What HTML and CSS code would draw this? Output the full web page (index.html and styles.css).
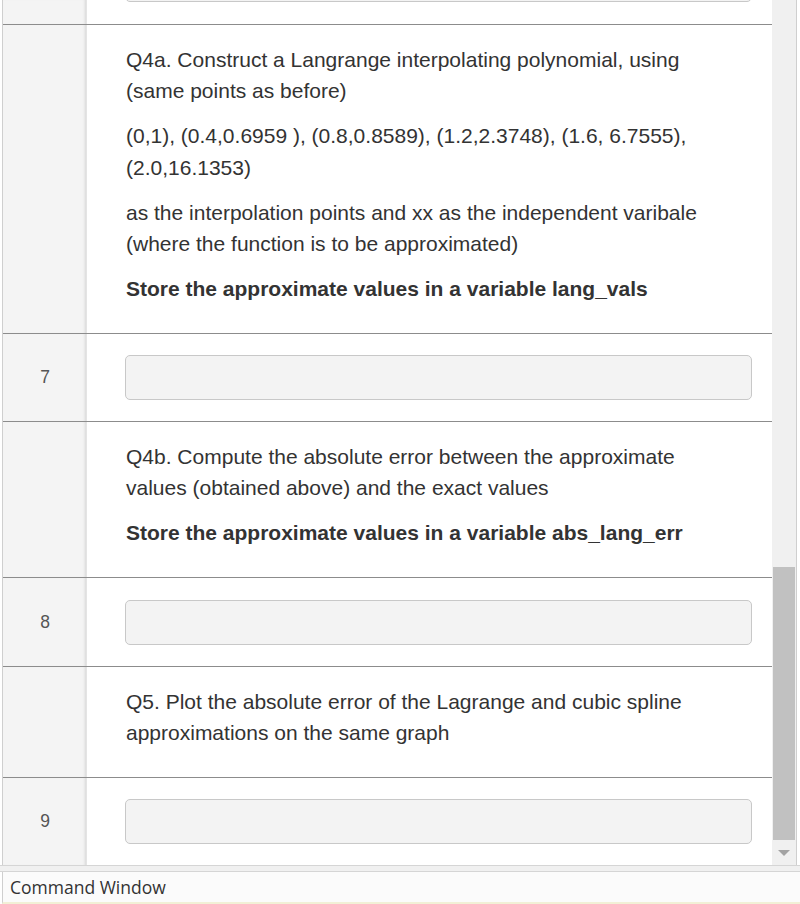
FILE: index.html
```html
<!DOCTYPE html>
<html>
<head>
<meta charset="utf-8">
<link rel="stylesheet" href="styles.css">
</head>
<body>
<div class="app">
  <div class="editor">
    <div class="doc">
      <div class="row row-cut">
        <div class="gutter"></div>
        <div class="cell code-cell"><div class="codebox codebox-cut"></div></div>
      </div>
      <div class="row">
        <div class="gutter"></div>
        <div class="cell text-cell">
          <p>Q4a. Construct a Langrange interpolating polynomial, using (same points as before)</p>
          <p>(0,1), (0.4,0.6959 ), (0.8,0.8589), (1.2,2.3748), (1.6, 6.7555), (2.0,16.1353)</p>
          <p>as the interpolation points and xx as the independent varibale (where the function is to be approximated)</p>
          <p class="bold">Store the approximate values in a variable lang_vals</p>
        </div>
      </div>
      <div class="row">
        <div class="gutter num">7</div>
        <div class="cell code-cell"><div class="codebox"></div></div>
      </div>
      <div class="row">
        <div class="gutter"></div>
        <div class="cell text-cell">
          <p>Q4b. Compute the absolute error between the approximate values (obtained above) and the exact values</p>
          <p class="bold">Store the approximate values in a variable abs_lang_err</p>
        </div>
      </div>
      <div class="row">
        <div class="gutter num">8</div>
        <div class="cell code-cell code-cell-tall"><div class="codebox"></div></div>
      </div>
      <div class="row">
        <div class="gutter"></div>
        <div class="cell text-cell">
          <p>Q5. Plot the absolute error of the Lagrange and cubic spline approximations on the same graph</p>
        </div>
      </div>
      <div class="row row-last">
        <div class="gutter num">9</div>
        <div class="cell code-cell"><div class="codebox"></div></div>
      </div>
    </div>
    <div class="scrollbar">
      <div class="track"><div class="thumb"></div></div>
      <div class="arrow"></div>
    </div>
  </div>
  <div class="sep"></div>
  <div class="cmd">Command Window</div>
</div>
</body>
</html>
```
FILE: styles.css
```css
* { box-sizing: border-box; }
html, body { margin: 0; padding: 0; background: #fff; }
.app { width: 800px; height: 904px; display: flex; flex-direction: column; overflow: hidden; }
.editor { height: 865px; display: flex; }
.doc { width: 770px; margin-left: 2px; border-left: 1px solid #cfcfcf; display: flex; flex-direction: column; overflow: hidden; }
.row { display: flex; border-bottom: 1px solid #8c8c8c; }
.row-last { border-bottom: none; flex: 1; }
.row-cut { height: 25px; overflow: hidden; }
.gutter { width: 84px; flex: none; background: #f4f4f4; box-shadow: inset -3px 0 3px -2px rgba(0,0,0,0.12); border-right: 1px solid #e4e4e4; }
.num { display: flex; align-items: center; justify-content: center; font-family: "Liberation Sans", Arial, sans-serif; font-size: 17.5px; color: #555; padding-left: 1px; }
.cell { flex: 1; background: #fff; }
.text-cell { padding: 18.5px 52px 15px 39px; font-family: "Liberation Sans", Arial, sans-serif; font-size: 21px; line-height: 31.5px; color: #333; }
.text-cell p { margin: 0 0 13.5px 0; }
.bold { font-weight: bold; }
.code-cell { padding: 21px 20px 21px 38px; }
.code-cell-tall { padding-top: 22px; }
.codebox { height: 45px; background: #f3f3f3; border: 1px solid #c8c8c8; border-radius: 5px; }
.codebox-cut { margin-top: -64px; }
.scrollbar { width: 25px; background: #f0f0f0; border-right: 1px solid #cfcfcf; display: flex; flex-direction: column; padding: 0 1px 0 1px; }
.track { flex: 1; display: flex; flex-direction: column; justify-content: flex-end; }
.thumb { height: 273px; background: #c1c1c1; }
.arrow { height: 25px; display: flex; align-items: center; justify-content: center; }
.arrow::after { content: ""; width: 0; height: 0; border-left: 6px solid transparent; border-right: 6px solid transparent; border-top: 6px solid #a3a3a3; }
.sep { height: 7px; background: #f0f0f0; border-top: 1px solid #d5d5d5; border-bottom: 1px solid #d5d5d5; }
.cmd { height: 32px; background: #fbfbfb; border-left: 1px solid #cfcfcf; margin-left: 2px; border-bottom: 2px solid #f2f0d6; font-family: "Open Sans", "Noto Sans", sans-serif; font-size: 17.5px; color: #333; padding-left: 7px; display: flex; align-items: center; }
```
